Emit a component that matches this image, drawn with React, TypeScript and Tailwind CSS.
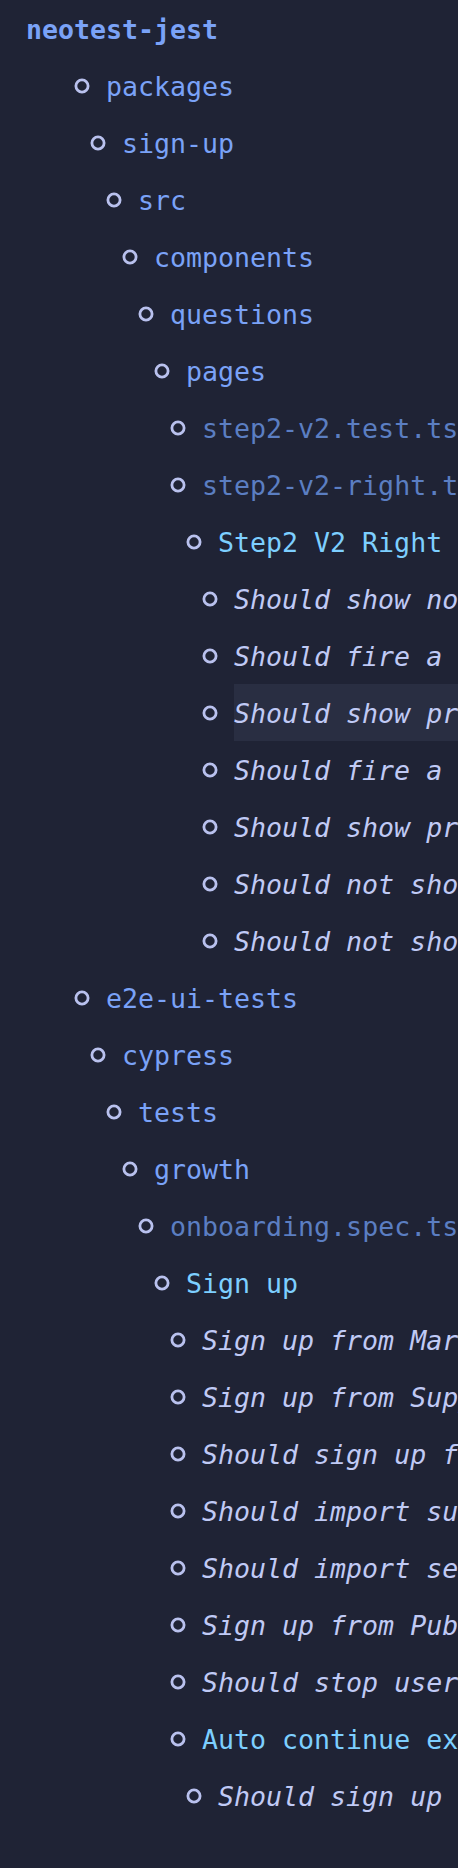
import React from 'react'

type Kind = 'dir' | 'file' | 'ns' | 'test'

type Row = {
  col: number
  kind: Kind
  name: string
  active?: boolean
}

const rows: Row[] = [
  { col: 3, kind: 'dir', name: 'packages' },
  { col: 4, kind: 'dir', name: 'sign-up' },
  { col: 5, kind: 'dir', name: 'src' },
  { col: 6, kind: 'dir', name: 'components' },
  { col: 7, kind: 'dir', name: 'questions' },
  { col: 8, kind: 'dir', name: 'pages' },
  { col: 9, kind: 'file', name: 'step2-v2.test.tsx' },
  { col: 9, kind: 'file', name: 'step2-v2-right.test.tsx' },
  { col: 10, kind: 'ns', name: 'Step2 V2 Right' },
  { col: 11, kind: 'test', name: 'Should show no errors by default' },
  { col: 11, kind: 'test', name: 'Should fire a change event' },
  { col: 11, kind: 'test', name: 'Should show progress bar', active: true },
  { col: 11, kind: 'test', name: 'Should fire a submit event' },
  { col: 11, kind: 'test', name: 'Should show previous answer' },
  { col: 11, kind: 'test', name: 'Should not show back button' },
  { col: 11, kind: 'test', name: 'Should not show skip button' },
  { col: 3, kind: 'dir', name: 'e2e-ui-tests' },
  { col: 4, kind: 'dir', name: 'cypress' },
  { col: 5, kind: 'dir', name: 'tests' },
  { col: 6, kind: 'dir', name: 'growth' },
  { col: 7, kind: 'file', name: 'onboarding.spec.ts' },
  { col: 8, kind: 'ns', name: 'Sign up' },
  { col: 9, kind: 'test', name: 'Sign up from Marketing site' },
  { col: 9, kind: 'test', name: 'Sign up from Support page' },
  { col: 9, kind: 'test', name: 'Should sign up from invite link' },
  { col: 9, kind: 'test', name: 'Should import survey template' },
  { col: 9, kind: 'test', name: 'Should import settings' },
  { col: 9, kind: 'test', name: 'Sign up from Public survey' },
  { col: 9, kind: 'test', name: 'Should stop user on invalid email' },
  { col: 9, kind: 'ns', name: 'Auto continue experiment' },
  { col: 10, kind: 'test', name: 'Should sign up and continue' },
]

// indentation columns are 16px wide, tree starts at x=26
const indent: Record<number, string> = {
  3: 'pl-[74px]',
  4: 'pl-[90px]',
  5: 'pl-[106px]',
  6: 'pl-[122px]',
  7: 'pl-[138px]',
  8: 'pl-[154px]',
  9: 'pl-[170px]',
  10: 'pl-[186px]',
  11: 'pl-[202px]',
}

const textColor: Record<Kind, string> = {
  dir: 'text-[#7aa2f7]',
  file: 'text-[#5b7ec2]',
  ns: 'text-[#7dcfff]',
  test: 'text-[#c0caf5] italic',
}

function Bullet() {
  return (
    <span className="w-[16px] h-[57px] flex items-center justify-center shrink-0">
      <svg width="16" height="16" viewBox="0 0 16 16">
        <circle cx="8" cy="8" r="6.1" fill="none" stroke="#b9c1ee" strokeWidth="2.8" />
      </svg>
    </span>
  )
}

export default function App() {
  return (
    <div className="w-[458px] h-[1868px] bg-[#1f2335] overflow-hidden font-['DejaVu_Sans_Mono',monospace] text-[26.6px] leading-[59px]">
      <div className="h-[57px] pl-[26px] font-bold text-[#7aa2f7] whitespace-nowrap overflow-hidden">
        neotest-jest
      </div>
      {rows.map((row, i) => (
        <div key={i} className={`flex h-[57px] overflow-hidden whitespace-nowrap ${indent[row.col]}`}>
          <Bullet />
          <span className="w-[16px] shrink-0" />
          <span
            className={`h-[57px] pr-4 ${textColor[row.kind]} ${
              row.active ? 'bg-[#292e42] flex-1' : ''
            }`}
          >
            {row.name}
          </span>
        </div>
      ))}
    </div>
  )
}
